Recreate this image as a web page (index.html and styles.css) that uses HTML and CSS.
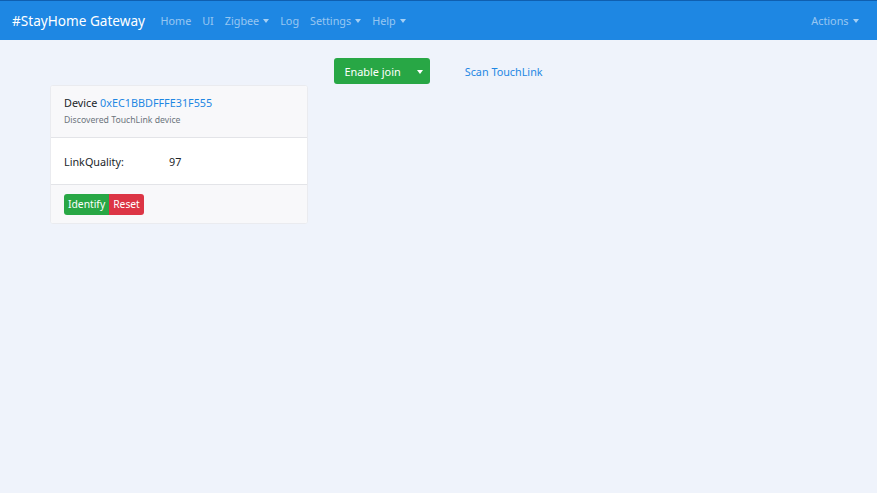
FILE: index.html
```html
<!DOCTYPE html>
<html>
<head>
<meta charset="utf-8">
<link rel="stylesheet" href="styles.css">
</head>
<body>
<nav class="navbar">
  <div class="nav-left">
    <span class="brand">#StayHome Gateway</span>
    <ul class="nav-links">
      <li>Home</li>
      <li>UI</li>
      <li class="dd">Zigbee</li>
      <li>Log</li>
      <li class="dd">Settings</li>
      <li class="dd">Help</li>
    </ul>
  </div>
  <ul class="nav-links">
    <li class="dd">Actions</li>
  </ul>
</nav>
<main class="content">
  <div class="toolbar">
    <div class="btn-group">
      <button class="btn btn-success btn-main">Enable join</button>
      <button class="btn btn-success btn-caret"><span class="caret"></span></button>
    </div>
    <a class="link-btn">Scan TouchLink</a>
  </div>
  <div class="card">
    <div class="card-header">
      <div class="card-title">Device <a class="link">0xEC1BBDFFFE31F555</a></div>
      <div class="card-sub">Discovered TouchLink device</div>
    </div>
    <div class="card-body">
      <div class="row"><span class="label">LinkQuality:</span><span class="val">97</span></div>
    </div>
    <div class="card-footer">
      <div class="btn-group">
        <button class="btn btn-success btn-sm">Identify</button>
        <button class="btn btn-danger btn-sm">Reset</button>
      </div>
    </div>
  </div>
</main>
</body>
</html>
```
FILE: styles.css
```css
* { box-sizing: border-box; }
body {
  margin: 0;
  background: #eff3fb;
  font-family: "Noto Sans", "Open Sans", sans-serif;
  font-size: 10.7px;
  color: #212529;
}
.navbar {
  height: 40px;
  background: #1e87e3;
  border-top: 1px solid #0f5fb0;
  display: flex;
  align-items: center;
  justify-content: space-between;
  padding: 0 13px 0 12px;
}
.nav-left { display: flex; align-items: center; }
.brand {
  color: #fff;
  font-size: 13.6px;
  margin-right: 10px;
  line-height: 1;
}
.nav-links {
  list-style: none;
  margin: 0;
  padding: 0;
  display: flex;
  color: rgba(255,255,255,0.55);
  font-size: 10.8px;
}
.nav-links li { padding: 0 5.5px; }
.nav-links li.dd::after {
  content: "";
  display: inline-block;
  margin-left: 4px;
  vertical-align: 2px;
  border-top: 4px solid rgba(255,255,255,0.6);
  border-left: 3.5px solid transparent;
  border-right: 3.5px solid transparent;
}
.content { padding: 18px 50px; }
.toolbar {
  display: flex;
  align-items: center;
  justify-content: center;
  gap: 35px;
  height: 26px;
  margin-bottom: 1px;
}
.btn-group { display: inline-flex; }
.btn {
  border: none;
  font-family: "Noto Sans", "Open Sans", sans-serif;
  color: #fff;
  cursor: pointer;
}
.btn-success { background: #28a745; }
.btn-danger { background: #dc3545; }
.btn-main {
  height: 26px;
  padding: 0 9px 0 10px;
  font-size: 10.9px;
  border-radius: 3px 0 0 3px;
}
.btn-caret {
  height: 26px;
  width: 20px;
  border-radius: 0 3px 3px 0;
  padding: 0;
}
.caret {
  display: inline-block;
  border-top: 4px solid #fff;
  border-left: 3.5px solid transparent;
  border-right: 3.5px solid transparent;
  vertical-align: 2px;
}
.link-btn { color: #1e87e3; font-size: 10.8px; }
.card {
  width: 258px;
  background: #fff;
  border: 1px solid #eaebef;
  border-radius: 3px;
  overflow: hidden;
}
.card-header {
  background: #f8f8fa;
  padding: 9px 13px 8px;
  border-bottom: 1px solid #e3e4e8;
  height: 52px;
}
.card-title { font-size: 10.8px; line-height: 16px; }
.link { color: #1e87e3; }
.card-sub { font-size: 8.7px; color: #6c757d; margin-top: 3px; }
.card-body {
  height: 47px;
  padding: 0 13px;
  display: flex;
  align-items: center;
  border-bottom: 1px solid #e3e4e8;
}
.row { display: flex; font-size: 10.8px; }
.label { width: 105px; }
.card-footer {
  background: #f8f8fa;
  height: 38px;
  padding: 0 13px;
  display: flex;
  align-items: center;
}
.btn-sm {
  height: 21px;
  font-size: 10.3px;
  padding: 0 4px;
}
.btn-sm:first-child { border-radius: 3px 0 0 3px; }
.btn-sm:last-child { border-radius: 0 3px 3px 0; }
```
